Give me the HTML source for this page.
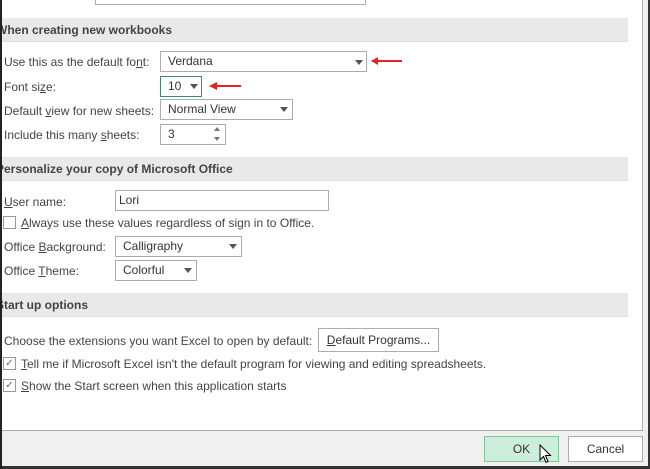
<!DOCTYPE html>
<html><head><meta charset="utf-8"><style>
*{margin:0;padding:0;box-sizing:border-box}
body{width:650px;height:469px;position:relative;overflow:hidden;background:#f0f0f0;font-family:"Liberation Sans",sans-serif;font-size:12px;color:#444}
.a{position:absolute;white-space:nowrap}
.box{position:absolute;border:1px solid #ababab;background:#fff;padding:0 0 0 7px;line-height:18px;color:#333}
.hd{position:absolute;left:1px;width:627px;height:24px;background:#e9e9e9;font-weight:bold;line-height:24px;color:#444;border-bottom:1px solid #e0e0e0;overflow:hidden}
.hd span{position:relative;left:-5px}
.dd{position:absolute;width:0;height:0;border-left:4px solid transparent;border-right:4px solid transparent;border-top:5px solid #555}
.cb{position:absolute;left:3px;width:13px;height:13px;border:1px solid #999;background:#fff}
.btn{position:absolute;border:1px solid #adadad;background:#fff;text-align:center;color:#333}
u{text-decoration:underline}
</style></head><body>
<div class="a" style="left:0;top:0;width:643px;height:431px;background:#fff;border-right:1px solid #ababab;border-bottom:1px solid #ababab"></div>
<div class="a" style="left:0;top:0;width:2px;height:469px;background:#222;z-index:2"></div>
<div class="a" style="left:648px;top:0;width:2px;height:469px;background:#333"></div>
<div class="a" style="left:0;top:466px;width:650px;height:3px;background:#333"></div>
<div class="box" style="left:95px;top:-16px;width:271px;height:21px"></div>

<div class="hd" style="top:18px"><span>When creating new workbooks</span></div>
<div class="a" style="left:4px;top:55px">Use this as the default fo<u>n</u>t:</div>
<div class="box" style="left:160px;top:51px;width:207px;height:21px">Verdana</div><div class="dd" style="left:355px;top:60px"></div>
<div class="a" style="left:372px;top:60px;width:30px;height:2px;background:#e3231f"></div><div class="a" style="left:371px;top:57px;width:0;height:0;border-top:4px solid transparent;border-bottom:4px solid transparent;border-right:7px solid #e3231f"></div>
<div class="a" style="left:4px;top:80px">Font si<u>z</u>e:</div>
<div class="box" style="left:160px;top:76px;width:42px;height:21px;border-color:#3c8f5a">10</div><div class="dd" style="left:190px;top:84px"></div>
<div class="a" style="left:216px;top:85px;width:25px;height:2px;background:#e3231f"></div><div class="a" style="left:209px;top:82px;width:0;height:0;border-top:4px solid transparent;border-bottom:4px solid transparent;border-right:8px solid #e3231f"></div>
<div class="a" style="left:4px;top:104px">Default <u>v</u>iew for new sheets:</div>
<div class="box" style="left:160px;top:99px;width:133px;height:21px">Normal View</div><div class="dd" style="left:280px;top:107px"></div>
<div class="a" style="left:4px;top:128px">Include this many <u>s</u>heets:</div>
<div class="box" style="left:160px;top:124px;width:66px;height:21px">3</div>
<div class="a" style="left:214px;top:127px;border-left:3px solid transparent;border-right:3px solid transparent;border-bottom:4px solid #777"></div>
<div class="a" style="left:214px;top:137px;border-left:3px solid transparent;border-right:3px solid transparent;border-top:4px solid #777"></div>

<div class="hd" style="top:157px"><span>Personalize your copy of Microsoft Office</span></div>
<div class="a" style="left:4px;top:195px"><u>U</u>ser name:</div>
<div class="box" style="left:115px;top:190px;width:214px;height:21px;padding-left:3px">Lori</div>
<div class="cb" style="top:216px"></div>
<div class="a" style="left:21px;top:216px"><u>A</u>lways use these values regardless of sign in to Office.</div>
<div class="a" style="left:4px;top:240px">Office <u>B</u>ackground:</div>
<div class="box" style="left:115px;top:236px;width:127px;height:21px">Calligraphy</div><div class="dd" style="left:229px;top:244px"></div>
<div class="a" style="left:4px;top:264px">Office <u>T</u>heme:</div>
<div class="box" style="left:115px;top:260px;width:82px;height:21px">Colorful</div><div class="dd" style="left:184px;top:268px"></div>

<div class="hd" style="top:293px"><span>Start up options</span></div>
<div class="a" style="left:4px;top:334px">Choose the extensions you want Excel to open by default:</div>
<div class="btn" style="left:318px;top:328px;width:121px;height:24px;line-height:22px"><u>D</u>efault Programs...</div>
<div class="cb" style="top:357px;color:#666;font-size:10px;line-height:11px;text-align:center">✓</div>
<div class="a" style="left:21px;top:357px"><u>T</u>ell me if Microsoft Excel isn't the default program for viewing and editing spreadsheets.</div>
<div class="cb" style="top:379px;color:#666;font-size:10px;line-height:11px;text-align:center">✓</div>
<div class="a" style="left:21px;top:379px"><u>S</u>how the Start screen when this application starts</div>

<div class="btn" style="left:484px;top:436px;width:75px;height:26px;line-height:24px;background:#cdeedb;border-color:#7fc79b">OK</div>
<div class="btn" style="left:568px;top:436px;width:75px;height:26px;line-height:24px">Cancel</div>
<svg class="a" style="left:539px;top:444px" width="14" height="22" viewBox="0 0 14 22"><path d="M1 1 L1 16 L4.5 12.5 L7 18.5 L9 17.5 L6.5 11.5 L11.5 11.5 Z" fill="#fff" stroke="#000" stroke-width="1"/></svg>
</body></html>
